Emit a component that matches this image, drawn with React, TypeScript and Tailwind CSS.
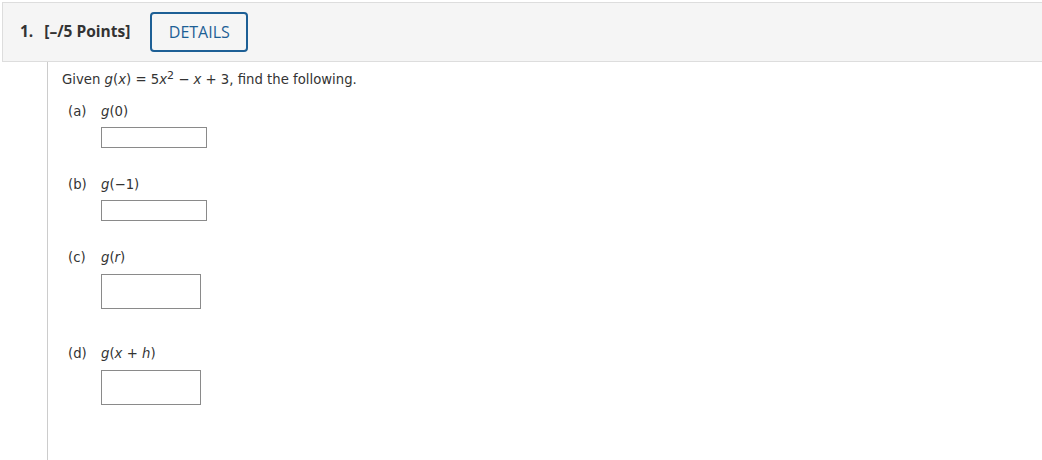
function M({ children }: { children: React.ReactNode }) {
  return <span className="italic">{children}</span>;
}

function Part({
  label,
  expr,
  box,
  className,
}: {
  label: string;
  expr: React.ReactNode;
  box: "short" | "tall";
  className?: string;
}) {
  return (
    <div className={className}>
      <div className="flex h-4 items-center font-['DejaVu_Sans',Verdana,sans-serif] text-[13.25px] leading-4 text-[#333]">
        <span className="ml-[6px] w-[33px]">({label})</span>
        <span>{expr}</span>
      </div>
      <div
        className={
          box === "short"
            ? "ml-[39px] mt-[7px] h-[21px] w-[106px] border border-[#8a8a8a] bg-white"
            : "ml-[39px] mt-[8px] h-[35px] w-[100px] border border-[#8a8a8a] bg-white"
        }
      />
    </div>
  );
}

export default function App() {
  return (
    <div className="min-h-[460px] w-[1042px] bg-white pt-[2px] pl-[2px]">
      <header className="flex h-[60px] items-center border-t border-b border-l border-[#dddddd] bg-[#f5f5f5] font-['Open_Sans',sans-serif]">
        <span className="ml-[17px] text-[15.5px] font-bold text-[#333]">1.</span>
        <span className="ml-[11px] text-[15.5px] font-bold text-[#333]">[–/5 Points]</span>
        <button className="ml-[20px] flex h-[40px] w-[98px] items-center justify-center rounded-[4px] border-2 border-[#1d5f95] text-[16px] font-medium text-[#1d5f95]">
          DETAILS
        </button>
      </header>

      <main className="ml-[45px] min-h-[398px] border-l border-[#cccccc] pl-[14px] pt-[10px]">
        <p className="h-4 font-['DejaVu_Sans',Verdana,sans-serif] text-[13.25px] leading-4 text-[#333]">
          Given <M>g</M>(<M>x</M>) = 5<M>x</M>
          <sup className="text-[11px]">2</sup> − <M>x</M> + 3, find the following.
        </p>

        <Part
          className="mt-4"
          label="a"
          box="short"
          expr={
            <>
              <M>g</M>(0)
            </>
          }
        />
        <Part
          className="mt-[29px]"
          label="b"
          box="short"
          expr={
            <>
              <M>g</M>(−1)
            </>
          }
        />
        <Part
          className="mt-[29px]"
          label="c"
          box="tall"
          expr={
            <>
              <M>g</M>(<M>r</M>)
            </>
          }
        />
        <Part
          className="mt-[37px]"
          label="d"
          box="tall"
          expr={
            <>
              <M>g</M>(<M>x</M> + <M>h</M>)
            </>
          }
        />
      </main>
    </div>
  );
}
